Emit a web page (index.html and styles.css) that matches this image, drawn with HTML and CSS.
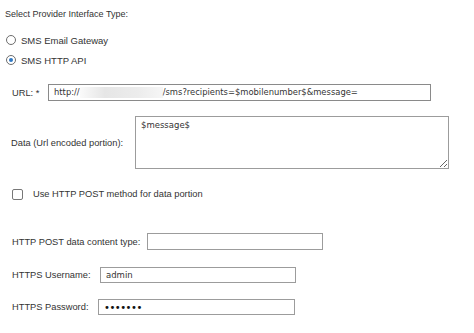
FILE: index.html
```html
<!DOCTYPE html>
<html lang="en">
<head>
    <meta charset="UTF-8">
    <meta name="viewport" content="width=device-width, initial-scale=1.0">
    <title>SMS Provider</title>
    <link rel="stylesheet" href="styles.css">
</head>
<body>
    <div id="container">
        <div class="title">Select Provider Interface Type:</div>
        <div class="choices">
            <label class="choice"><span class="radio"></span>SMS Email Gateway</label>
            <label class="choice"><span class="radio checked"></span>SMS HTTP API</label>
        </div>

        <div class="row url-row">
            <label class="lbl url-lbl">URL: *</label>
            <div class="field url-field">http://<span class="blur"></span>/sms?recipients=$mobilenumber$&amp;message=</div>
        </div>

        <div class="row data-row">
            <label class="lbl data-lbl">Data (Url encoded portion):</label>
            <textarea class="data-box">$message$</textarea>
        </div>

        <label class="row check-row"><span class="checkbox"></span>Use HTTP POST method for data portion</label>

        <div class="row type-row">
            <label class="lbl type-lbl">HTTP POST data content type:</label>
            <input class="field type-field" type="text">
        </div>

        <div class="row user-row">
            <label class="lbl user-lbl">HTTPS Username:</label>
            <input class="field user-field" type="text" value="admin">
        </div>

        <div class="row pass-row">
            <label class="lbl pass-lbl">HTTPS Password:</label>
            <input class="field pass-field" type="password" value="1234567">
        </div>
    </div>
</body>
</html>
```
FILE: styles.css
```css
body {
    font-family: 'Liberation Sans', Arial, sans-serif;
    font-size: 9.3px;
    color: #333;
    background-color: #fff;
    margin: 0;
    padding: 0;
}

#container {
    padding: 0 0 0 5px;
}

.title {
    margin-top: 7px;
    line-height: 14px;
    font-size: 9px;
}

.choices {
    margin-top: 9px;
}

.choice {
    display: flex;
    align-items: center;
    height: 20px;
    font-size: 9.5px;
}

.radio {
    width: 8px;
    height: 8px;
    margin: 0 5px 0 1px;
    border: 1px solid #6d6d6d;
    border-radius: 50%;
    display: flex;
    align-items: center;
    justify-content: center;
}

.radio.checked::after {
    content: '';
    width: 4px;
    height: 4px;
    border-radius: 50%;
    background-color: #2f78c4;
}

.row {
    display: flex;
    align-items: center;
}

.lbl {
    box-sizing: border-box;
    padding-left: 7px;
    flex-shrink: 0;
}

.field {
    box-sizing: border-box;
    border: 1px solid #9c9c9c;
    font-family: 'DejaVu Sans', Verdana, sans-serif;
    font-size: 8.5px;
    color: #333;
    padding: 0 5px;
    margin: 0;
    outline: none;
}

.url-row {
    margin-top: 14px;
}

.url-lbl {
    width: 43px;
}

.url-field {
    width: 383px;
    height: 17px;
    line-height: 15px;
    border-color: #8a8a8a;
    font-size: 8.4px;
    white-space: nowrap;
    overflow: hidden;
}

.blur {
    display: inline-block;
    width: 83px;
    height: 11px;
    vertical-align: middle;
    background: linear-gradient(90deg, #fafafa, #e6e6e6 30%, #ececec 70%, #f6f6f6);
}

.data-row {
    margin-top: 15px;
}

.data-lbl {
    padding-left: 6px;
    width: 130px;
}

.data-box {
    box-sizing: border-box;
    width: 314px;
    height: 53px;
    border: 1px solid #9c9c9c;
    font-family: 'DejaVu Sans', Verdana, sans-serif;
    font-size: 8.5px;
    color: #333;
    padding: 3px 5px;
    margin: 0;
    outline: none;
}

.check-row {
    margin-top: 17px;
    height: 16px;
    padding-left: 7px;
}

.checkbox {
    box-sizing: border-box;
    width: 11px;
    height: 11px;
    margin-right: 10px;
    border: 1px solid #777;
    border-radius: 2px;
}

.type-row {
    margin-top: 31px;
}

.type-lbl {
    width: 142px;
}

.type-field {
    width: 176px;
    height: 17px;
}

.user-row {
    margin-top: 17px;
}

.user-lbl {
    width: 95px;
}

.user-field {
    width: 196px;
    height: 16px;
}

.pass-row {
    margin-top: 16px;
}

.pass-lbl {
    width: 93px;
}

.pass-field {
    width: 197px;
    height: 16px;
    font-size: 10px;
    letter-spacing: -0.5px;
    color: #111;
}
```
